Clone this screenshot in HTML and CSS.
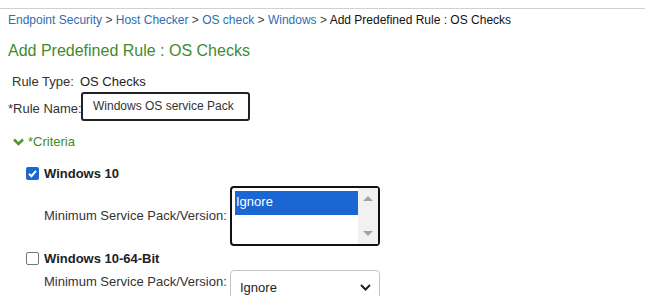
FILE: index.html
```html
<!DOCTYPE html>
<html lang="en">
<head>
  <meta charset="UTF-8" />
  <title>Add Predefined Rule : OS Checks</title>
  <link rel="stylesheet" href="styles.css">
</head>
<body>
  <div class="topbar"></div>
  <div class="crumbs">
    <a href="#">Endpoint Security</a> <span class="sep">&gt;</span>
    <a href="#">Host Checker</a> <span class="sep">&gt;</span>
    <a href="#">OS check</a> <span class="sep">&gt;</span>
    <a href="#">Windows</a> <span class="sep">&gt;</span>
    <span class="current">Add Predefined Rule : OS Checks</span>
  </div>
  <h1 class="title">Add Predefined Rule : OS Checks</h1>

  <div class="form">
    <div class="row-type">
      <span class="label">Rule Type:</span>
      <span class="value">OS Checks</span>
    </div>
    <div class="row-name">
      <span class="label">*Rule Name:</span>
      <div class="textbox">Windows OS service Pack</div>
    </div>

    <div class="criteria">
      <svg class="chev" width="11" height="8" viewBox="0 0 11 8">
        <path d="M1 1.5 L5.5 6 L10 1.5" fill="none" stroke="#4a9a2c" stroke-width="2.6" />
      </svg>
      <span>*Criteria</span>
    </div>

    <div class="os">
      <div class="os-head">
        <span class="check on">
          <svg width="13" height="13" viewBox="0 0 13 13">
            <path d="M3 6.8 L5.4 9.2 L10 3.8" fill="none" stroke="#fff" stroke-width="2" />
          </svg>
        </span>
        <span class="os-name">Windows 10</span>
      </div>
      <div class="os-row with-list">
        <span class="sp-label">Minimum Service Pack/Version:</span>
        <div class="listbox">
          <div class="options">
            <div class="opt selected">Ignore</div>
          </div>
          <div class="scroll">
            <span class="arrow up"></span>
            <span class="arrow down"></span>
          </div>
        </div>
      </div>
    </div>

    <div class="os">
      <div class="os-head second">
        <span class="check"></span>
        <span class="os-name">Windows 10-64-Bit</span>
      </div>
      <div class="os-row with-drop">
        <span class="sp-label">Minimum Service Pack/Version:</span>
        <div class="dropdown">
          <span>Ignore</span>
          <svg width="11" height="7" viewBox="0 0 11 7">
            <path d="M1 1 L5.5 5.5 L10 1" fill="none" stroke="#222" stroke-width="2" />
          </svg>
        </div>
      </div>
    </div>
  </div>
</body>
</html>
```

FILE: styles.css
```css
body {
  margin: 0;
  font-family: "Liberation Sans", Arial, sans-serif;
  color: #333;
  background: #fff;
  overflow: hidden;
}
.topbar {
  height: 8px;
  border-bottom: 1px solid #c9d1d9;
}
.crumbs {
  padding: 4px 8px 0;
  font-size: 12px;
  line-height: 14px;
  height: 14px;
  white-space: nowrap;
}
.crumbs a {
  color: #2f6db3;
  text-decoration: none;
}
.crumbs .sep {
  color: #444;
}
.crumbs .current {
  color: #111;
}
.title {
  margin: 15px 0 0 8px;
  font-size: 16px;
  line-height: 18px;
  font-weight: normal;
  color: #3e8b2e;
}
.form {
  font-size: 13px;
  line-height: 15px;
}
.row-type {
  margin-top: 14px;
  padding-left: 12px;
  display: flex;
  gap: 6px;
}
.row-type .value {
  color: #222;
}
.row-name {
  display: flex;
  align-items: flex-start;
  margin-top: 3px;
  padding-left: 8px;
}
.row-name .label {
  margin-top: 9px;
  width: 73px;
  white-space: nowrap;
}
.textbox {
  box-sizing: border-box;
  width: 169px;
  height: 29px;
  border: 2px solid #222;
  border-radius: 3px;
  padding: 5px 0 0 10px;
  font-size: 12px;
  line-height: 14px;
  color: #333;
}
.criteria {
  display: flex;
  align-items: center;
  margin-top: 13px;
  padding-left: 13px;
  color: #3d8a2c;
}
.criteria .chev {
  margin-right: 4px;
  margin-top: 1px;
}
.os-head {
  display: flex;
  align-items: center;
  margin-top: 17px;
  padding-left: 26px;
}
.os-head.second {
  margin-top: 5px;
}
.check {
  box-sizing: border-box;
  width: 13px;
  height: 13px;
  border: 1px solid #767676;
  border-radius: 2px;
  margin-right: 5px;
  display: flex;
}
.check.on {
  border: none;
  background: #1a66d6;
}
.os-name {
  font-weight: bold;
  color: #222;
}
.os-row {
  display: flex;
  align-items: flex-start;
  padding-left: 44px;
  margin-top: 5px;
}
.sp-label {
  width: 186px;
  white-space: nowrap;
}
.with-list .sp-label {
  margin-top: 22px;
}
.with-drop {
  margin-top: 4px;
}
.with-drop .sp-label {
  margin-top: 4px;
}
.listbox {
  box-sizing: border-box;
  width: 150px;
  height: 60px;
  border: 2px solid #111;
  border-radius: 4px;
  display: flex;
  padding: 3px 0 0 3px;
}
.options {
  flex: 1;
}
.opt {
  height: 24px;
  line-height: 22px;
  padding-left: 1px;
  color: #222;
}
.opt.selected {
  background: #1a67d3;
  color: #fff;
}
.scroll {
  width: 20px;
  margin-top: -3px;
  background: #f1f1f1;
  position: relative;
}
.arrow {
  position: absolute;
  left: 5px;
  width: 0;
  height: 0;
  border-left: 5px solid transparent;
  border-right: 5px solid transparent;
}
.arrow.up {
  top: 8px;
  border-bottom: 5px solid #a3a3a3;
}
.arrow.down {
  bottom: 8px;
  border-top: 5px solid #a3a3a3;
}
.dropdown {
  box-sizing: border-box;
  width: 150px;
  height: 32px;
  border: 1px solid #c4c4c4;
  border-radius: 4px;
  display: flex;
  align-items: center;
  justify-content: space-between;
  padding: 2px 8px 0 9px;
  color: #222;
}
```
